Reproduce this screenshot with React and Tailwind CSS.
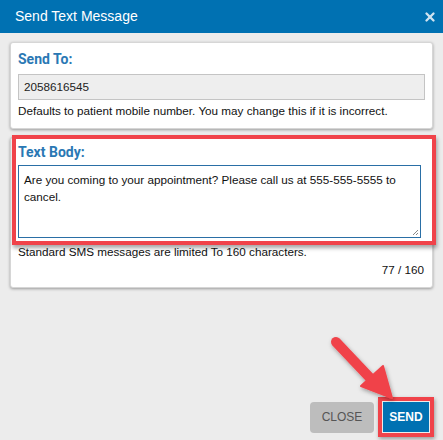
import { X } from "lucide-react";

// Send Text Message dialog, with the red annotation callouts from the screenshot

const FONT = { fontFamily: '"Liberation Sans", Arial, sans-serif' };
const LABEL_FONT = { fontFamily: 'Roboto, "Liberation Sans", Arial, sans-serif' };

function Arrow() {
  return (
    <svg
      className="absolute left-0 top-0 pointer-events-none"
      width="443"
      height="440"
      viewBox="0 0 443 440"
    >
      <defs>
        <filter id="arrowShadow" x="-20%" y="-20%" width="140%" height="140%">
          <feDropShadow dx="1" dy="2" stdDeviation="2" floodColor="#000" floodOpacity="0.35" />
        </filter>
      </defs>
      <g filter="url(#arrowShadow)">
        <line x1="336" y1="342" x2="372" y2="380" stroke="#f0434a" strokeWidth="10" strokeLinecap="round" />
        <polygon points="392,398 361,386 383,366" fill="#f0434a" stroke="#f0434a" strokeWidth="2" strokeLinejoin="round" />
      </g>
    </svg>
  );
}

export default function App() {
  const body =
    "Are you coming to your appointment? Please call us at 555-555-5555 to cancel.";

  return (
    <div className="relative w-[443px] h-[440px] bg-[#ececec] flex flex-col overflow-hidden" style={FONT}>
      {/* Header */}
      <header className="h-[33px] bg-[#0071b2] flex items-center justify-between pl-[15px] pr-[6px] shrink-0">
        <span className="text-white text-[14px]">Send Text Message</span>
        <X className="w-[14px] h-[14px] text-[#cfe3f0]" strokeWidth={4} />
      </header>

      {/* Send To card */}
      <section className="mx-[10px] mt-[9px] bg-white border border-[#d6d6d6] rounded-[3px] shadow-[0_1px_3px_rgba(0,0,0,0.35)] px-[7px] pt-[6px] pb-[10px]">
        <h2 className="text-[14px] leading-[20px] font-bold text-[#2a78b4]" style={LABEL_FONT}>
          Send To:
        </h2>
        <div className="mt-[5px] h-[26px] bg-[#eeeeee] border border-[#c4c4c4] flex items-center px-[5px] text-[11.7px] text-[#222]">
          2058616545
        </div>
        <p className="mt-[4px] text-[11.7px] leading-[14px] text-[#111]">
          Defaults to patient mobile number. You may change this if it is incorrect.
        </p>
      </section>

      {/* Text Body card */}
      <section className="relative mx-[10px] mt-[8px] bg-white border border-[#d6d6d6] rounded-[3px] shadow-[0_1px_3px_rgba(0,0,0,0.35)] px-[7px] pt-[4px] pb-[10px]">
        <h2 className="text-[14px] leading-[20px] font-bold text-[#2a78b4]" style={LABEL_FONT}>
          Text Body:
        </h2>
        <div className="mt-[3px] mr-[4px] h-[73px] border border-[#2a6fa6] px-[5px] pt-[5px] text-[11.7px] leading-[17px] text-[#111] relative">
          {body}
          <svg className="absolute right-[1px] bottom-[1px]" width="7" height="7" viewBox="0 0 7 7">
            <path d="M6 1 L1 6 M6 4 L4 6" stroke="#888" strokeWidth="1" />
          </svg>
        </div>
        <p className="mt-[7px] text-[11.7px] leading-[14px] text-[#111]">
          Standard SMS messages are limited To 160 characters.
        </p>
        <p className="mt-[4px] text-right text-[11.7px] leading-[14px] text-[#111] pr-[1px]">
          77 / 160
        </p>

        {/* red callout around label + textarea */}
        <div className="absolute left-[1px] top-[-3px] w-[424px] h-[110px] border-[4px] border-[#f0434a] shadow-[1px_3px_4px_rgba(0,0,0,0.35)] pointer-events-none" />
      </section>

      {/* Footer buttons */}
      <footer className="mt-auto flex justify-end items-center gap-[4px] pr-[9px] pb-[3px]">
        <button className="h-[31px] w-[64px] rounded-[4px] bg-[#bdbdbd] text-[#555] text-[12px]">
          CLOSE
        </button>
        <div className="border-[4px] border-[#f0434a] shadow-[1px_2px_4px_rgba(0,0,0,0.35)] p-[1px]">
          <button className="h-[30px] w-[46px] bg-[#0071b2] text-white text-[12px] font-bold">
            SEND
          </button>
        </div>
      </footer>

      <Arrow />
    </div>
  );
}
